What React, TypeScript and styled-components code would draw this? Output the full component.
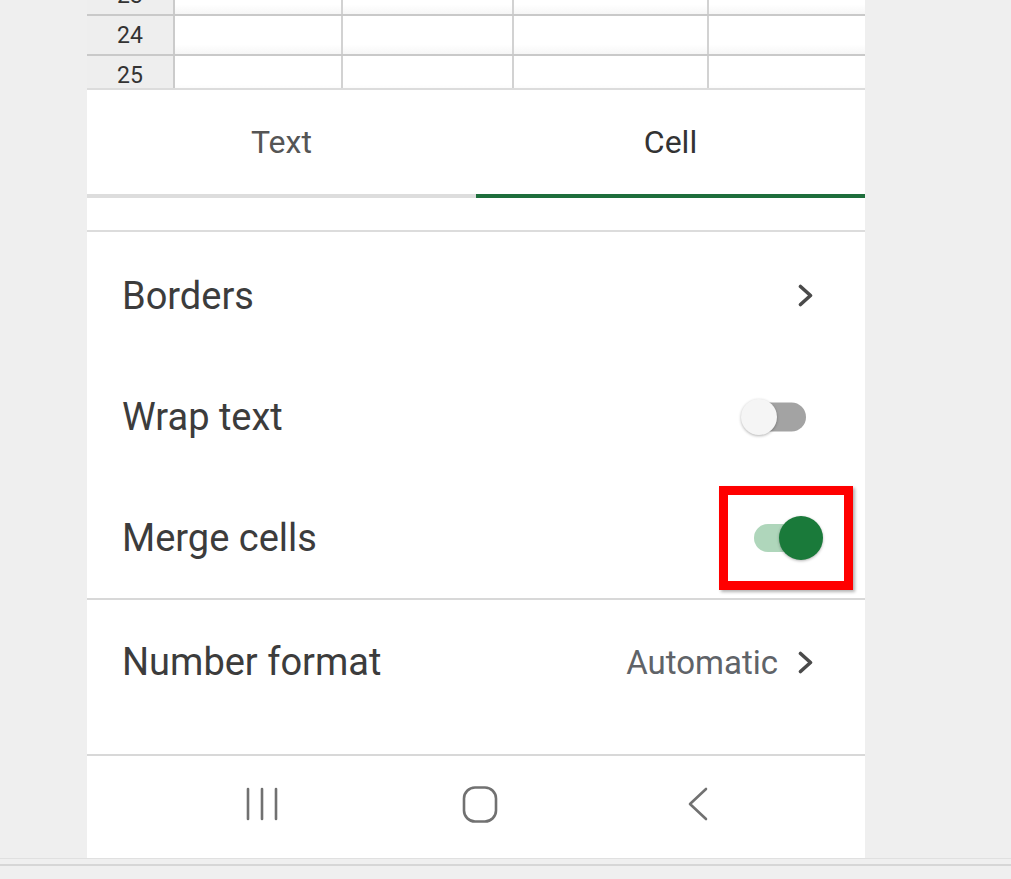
import React from 'react';
import styled, { createGlobalStyle } from 'styled-components';

const GlobalStyle = createGlobalStyle`
  html, body {
    margin: 0;
    padding: 0;
    background: #efefef;
    font-family: Roboto, "Noto Sans", Arial, sans-serif;
  }
  * {
    box-sizing: border-box;
  }
`;

const Page = styled.div`
  width: 1011px;
  height: 879px;
  display: flex;
  flex-direction: column;
  overflow: hidden;
  background: #efefef;
`;

const Main = styled.div`
  display: flex;
  padding-left: 87px;
`;

const Phone = styled.div`
  width: 778px;
  display: flex;
  flex-direction: column;
  background: #fff;
`;

const Sheet = styled.div`
  height: 88px;
  overflow: hidden;
  background: #fff;
`;

const SheetRows = styled.div`
  margin-top: -24px;
`;

const SheetRow = styled.div`
  display: grid;
  grid-template-columns: 88px 168px 171px 195px 156px;
  height: 40px;
  border-bottom: 2px solid #c9c9c9;
`;

const RowHead = styled.div`
  display: flex;
  align-items: center;
  justify-content: center;
  background: #eeeeee;
  border-right: 2px solid #cbcbcb;
  color: #333;
  font-size: 23px;
`;

const SheetCell = styled.div<{ $last?: boolean }>`
  border-right: ${(p) => (p.$last ? 'none' : '2px solid #d2d2d2')};
  background: linear-gradient(to bottom, #fff 75%, #f6f6f6 100%);
`;

const BottomSheet = styled.div`
  border-top: 2px solid #dcdcdc;
  display: flex;
  flex-direction: column;
`;

const Tabs = styled.div`
  display: flex;
`;

const Tab = styled.div<{ $active?: boolean }>`
  flex: 1;
  height: 108px;
  display: flex;
  align-items: center;
  justify-content: center;
  font-size: 32px;
  font-weight: 400;
  color: ${(p) => (p.$active ? '#333' : '#555')};
  border-bottom: 4px solid ${(p) => (p.$active ? '#1e6e3c' : '#dddddd')};
`;

const Spacer = styled.div`
  height: 34px;
  border-bottom: 2px solid #dcdcdc;
`;

const Section = styled.div<{ $bottom?: number; $top?: number }>`
  display: flex;
  flex-direction: column;
  padding-top: ${(p) => p.$top ?? 0}px;
  padding-bottom: ${(p) => p.$bottom ?? 0}px;
  border-bottom: 2px solid #d8d8d8;
`;

const Row = styled.div<{ $h?: number }>`
  height: ${(p) => p.$h ?? 121}px;
  display: flex;
  align-items: center;
  justify-content: space-between;
  padding: 0 52px 0 35px;
`;

const Label = styled.span`
  font-size: 38px;
  color: #3c3c3c;
`;

const Trail = styled.div`
  display: flex;
  align-items: center;
  gap: 20px;
`;

const Value = styled.span`
  font-size: 33px;
  color: #5f6368;
`;

const Chevron = () => (
  <svg width="15" height="23" viewBox="0 0 15 23">
    <polyline
      points="2.5,2.5 12.5,11.5 2.5,20.5"
      fill="none"
      stroke="#4a4a4a"
      strokeWidth="3.6"
      strokeLinecap="round"
      strokeLinejoin="round"
    />
  </svg>
);

const SwitchBox = styled.div<{ $on?: boolean }>`
  position: relative;
  width: ${(p) => (p.$on ? 69 : 65)}px;
  height: ${(p) => (p.$on ? 44 : 36)}px;
  margin-right: ${(p) => (p.$on ? 0 : 7)}px;
`;

const Track = styled.div<{ $on?: boolean }>`
  position: absolute;
  top: 50%;
  transform: translateY(-50%);
  left: ${(p) => (p.$on ? 0 : 6)}px;
  right: ${(p) => (p.$on ? 15 : 0)}px;
  height: ${(p) => (p.$on ? 28 : 29)}px;
  border-radius: 15px;
  background: ${(p) => (p.$on ? '#afd6bb' : '#a3a3a3')};
`;

const Thumb = styled.div<{ $on?: boolean }>`
  position: absolute;
  top: 50%;
  transform: translateY(-50%);
  ${(p) => (p.$on ? 'right: 0;' : 'left: 0;')}
  width: ${(p) => (p.$on ? 44 : 36)}px;
  height: ${(p) => (p.$on ? 44 : 36)}px;
  border-radius: 50%;
  background: ${(p) => (p.$on ? '#1a7a3a' : '#f5f5f5')};
  box-shadow: 0 1px 3px rgba(0, 0, 0, 0.3);
`;

const Switch = ({ on }: { on?: boolean }) => (
  <SwitchBox $on={on}>
    <Track $on={on} />
    <Thumb $on={on} />
  </SwitchBox>
);

const Highlight = styled.div`
  width: 134px;
  height: 104px;
  border: 9px solid #ff0000;
  margin-right: -40px;
  display: flex;
  align-items: center;
  justify-content: center;
  padding-left: 4px;
  box-shadow: 2px 2px 3px rgba(0, 0, 0, 0.3);
`;

const NavBar = styled.div`
  height: 102px;
  display: flex;
  align-items: center;
  justify-content: center;
  padding: 0 0 6px 8px;
`;

const NavSlot = styled.div`
  width: 218px;
  display: flex;
  justify-content: center;
  align-items: center;
`;

const Footer = styled.div`
  flex: 1;
  border-top: 1px solid #e0e0e0;
`;

const FooterLine = styled.div`
  margin-top: 5px;
  border-top: 2px solid #d6d6d6;
`;

const navStroke = '#717171';

const RecentsIcon = () => (
  <svg width="32" height="34" viewBox="0 0 32 34">
    <g stroke={navStroke} strokeWidth="2.6" strokeLinecap="round">
      <line x1="2" y1="2" x2="2" y2="32" />
      <line x1="16" y1="2" x2="16" y2="32" />
      <line x1="30" y1="2" x2="30" y2="32" />
    </g>
  </svg>
);

const HomeIcon = () => (
  <svg width="36" height="37" viewBox="0 0 36 37">
    <rect x="2" y="1.5" width="32" height="34" rx="11" fill="none" stroke={navStroke} strokeWidth="2.6" />
  </svg>
);

const BackIcon = () => (
  <svg width="22" height="34" viewBox="0 0 22 34">
    <polyline
      points="19,2 3,17 19,32"
      fill="none"
      stroke={navStroke}
      strokeWidth="2.6"
      strokeLinecap="round"
      strokeLinejoin="round"
    />
  </svg>
);

const sheetRows = ['23', '24', '25'];

export default function App() {
  return (
    <Page>
      <GlobalStyle />
      <Main>
        <Phone>
          <Sheet>
            <SheetRows>
              {sheetRows.map((n) => (
                <SheetRow key={n}>
                  <RowHead>{n}</RowHead>
                  <SheetCell />
                  <SheetCell />
                  <SheetCell />
                  <SheetCell $last />
                </SheetRow>
              ))}
            </SheetRows>
          </Sheet>
          <BottomSheet>
            <Tabs>
              <Tab>Text</Tab>
              <Tab $active>Cell</Tab>
            </Tabs>
            <Spacer />
            <Section $top={3}>
              <Row>
                <Label>Borders</Label>
                <Chevron />
              </Row>
              <Row>
                <Label>Wrap text</Label>
                <Switch />
              </Row>
              <Row>
                <Label>Merge cells</Label>
                <Highlight>
                  <Switch on />
                </Highlight>
              </Row>
            </Section>
            <Section $bottom={30}>
              <Row $h={124}>
                <Label>Number format</Label>
                <Trail>
                  <Value>Automatic</Value>
                  <Chevron />
                </Trail>
              </Row>
            </Section>
            <NavBar>
              <NavSlot>
                <RecentsIcon />
              </NavSlot>
              <NavSlot>
                <HomeIcon />
              </NavSlot>
              <NavSlot>
                <BackIcon />
              </NavSlot>
            </NavBar>
          </BottomSheet>
        </Phone>
      </Main>
      <Footer>
        <FooterLine />
      </Footer>
    </Page>
  );
}
